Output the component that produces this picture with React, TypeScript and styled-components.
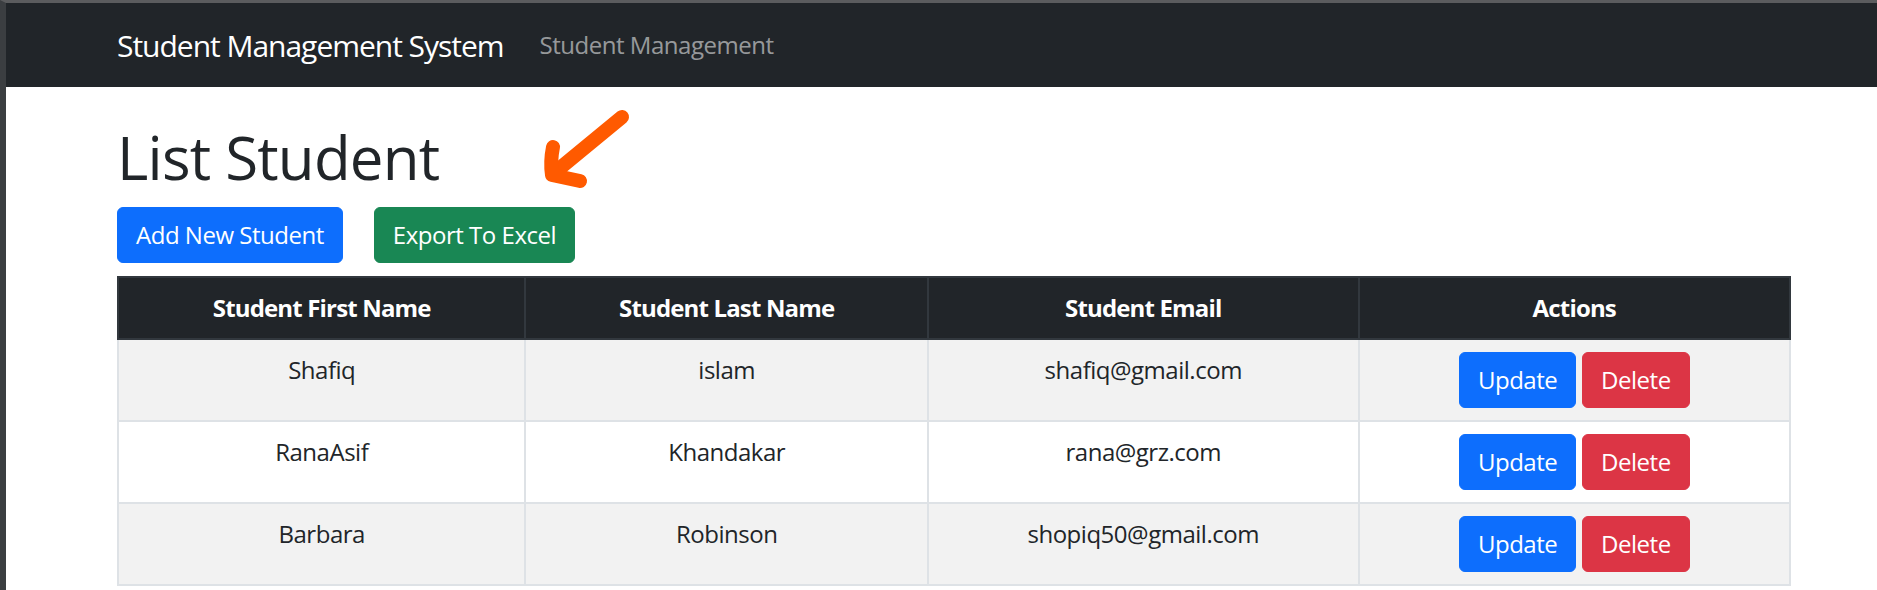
import styled, { createGlobalStyle } from 'styled-components'

const GlobalStyle = createGlobalStyle`
  html, body {
    margin: 0;
    padding: 0;
    background: #ffffff;
  }
  body {
    font-family: "Open Sans", "Noto Sans", "Liberation Sans", sans-serif;
    letter-spacing: -0.03em;
    color: #212529;
  }
`

const Frame = styled.div`
  position: relative;
  min-height: 100vh;
  box-sizing: border-box;
  border-top: 3px solid #5b5c5e;
  border-left: 6px solid #3b3e41;
  background: #ffffff;
`

const Navbar = styled.nav`
  background: #212529;
  height: 84px;
  display: flex;
  align-items: center;
  padding-left: 111px;
`

const Brand = styled.a`
  font-size: 30px;
  line-height: 45px;
  letter-spacing: -0.034em;
  color: #ffffff;
  margin-right: 24px;
  text-decoration: none;
`

const NavLink = styled.a`
  font-size: 24px;
  line-height: 36px;
  padding: 0 12px;
  color: rgba(255, 255, 255, 0.55);
  text-decoration: none;
`

const Main = styled.main`
  padding-left: 111px;
  width: 1674px;
`

const Title = styled.h1`
  font-size: 60px;
  font-weight: 500;
  line-height: 72px;
  letter-spacing: -0.013em;
  margin: 34px 0 14px;
`

const Toolbar = styled.div`
  display: flex;
  gap: 31px;
  margin-bottom: 13px;
`

const Button = styled.button<{ $variant: 'primary' | 'success' | 'danger' }>`
  font-family: inherit;
  letter-spacing: inherit;
  font-size: 24px;
  line-height: 36px;
  padding: 9px 18px;
  border-radius: 6px;
  color: #ffffff;
  cursor: pointer;
  border: 1.5px solid
    ${({ $variant }) =>
      $variant === 'primary' ? '#0d6efd' : $variant === 'success' ? '#198754' : '#dc3545'};
  background: ${({ $variant }) =>
    $variant === 'primary' ? '#0d6efd' : $variant === 'success' ? '#198754' : '#dc3545'};
`

const Table = styled.table`
  width: 1674px;
  border-collapse: collapse;
  vertical-align: top;
  font-size: 24px;
  line-height: 36px;
  text-align: center;
`

const Col = styled.col<{ $width: number }>`
  width: ${({ $width }) => $width}px;
`

const HeadCell = styled.th`
  background: #212529;
  color: #ffffff;
  font-weight: 700;
  letter-spacing: -0.035em;
  padding: 12px;
  border: 2px solid #32383e;
`

const Row = styled.tr<{ $striped: boolean }>`
  background: ${({ $striped }) => ($striped ? '#f2f2f2' : '#ffffff')};
`

const Cell = styled.td`
  padding: 12px;
  border: 2px solid #dee2e6;
  vertical-align: top;
`

const Arrow = styled.svg`
  position: absolute;
  left: 529px;
  top: 97px;
  pointer-events: none;
`

const students = [
  { first: 'Shafiq', last: 'islam', email: 'shafiq@gmail.com' },
  { first: 'RanaAsif', last: 'Khandakar', email: 'rana@grz.com' },
  { first: 'Barbara', last: 'Robinson', email: 'shopiq50@gmail.com' },
]

export default function App() {
  return (
    <>
      <GlobalStyle />
      <Frame>
        <Navbar>
          <Brand href="#">Student Management System</Brand>
          <NavLink href="#">Student Management</NavLink>
        </Navbar>
        <Main>
          <Title>List Student</Title>
          <Toolbar>
            <Button $variant="primary">Add New Student</Button>
            <Button $variant="success">Export To Excel</Button>
          </Toolbar>
          <Table>
            <colgroup>
              <Col $width={408} />
              <Col $width={403} />
              <Col $width={431} />
              <Col $width={432} />
            </colgroup>
            <thead>
              <tr>
                <HeadCell>Student First Name</HeadCell>
                <HeadCell>Student Last Name</HeadCell>
                <HeadCell>Student Email</HeadCell>
                <HeadCell>Actions</HeadCell>
              </tr>
            </thead>
            <tbody>
              {students.map((s, i) => (
                <Row key={s.email} $striped={i % 2 === 0}>
                  <Cell>{s.first}</Cell>
                  <Cell>{s.last}</Cell>
                  <Cell>{s.email}</Cell>
                  <Cell>
                    <Button $variant="primary">Update</Button>{' '}
                    <Button $variant="danger">Delete</Button>
                  </Cell>
                </Row>
              ))}
            </tbody>
          </Table>
        </Main>
        <Arrow width="100" height="95" viewBox="0 0 100 95">
          <g
            fill="none"
            stroke="#ff5a00"
            strokeWidth="14"
            strokeLinecap="round"
            strokeLinejoin="round"
          >
            <path d="M87 17 L19 73" />
            <path d="M18 47 Q15 62 17 75 L45 81" />
          </g>
        </Arrow>
      </Frame>
    </>
  )
}
